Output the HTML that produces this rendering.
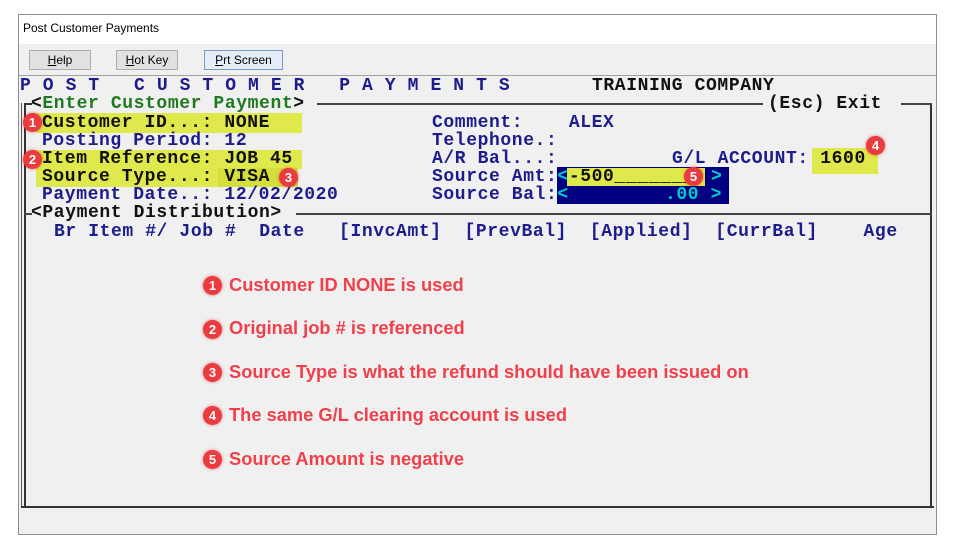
<!DOCTYPE html>
<html><head><meta charset="utf-8"><style>
*{margin:0;padding:0;box-sizing:border-box}
body{width:975px;height:552px;background:#fff;position:relative;overflow:hidden;font-family:"Liberation Sans",sans-serif}
.a{position:absolute}
.m{position:absolute;font-family:"Liberation Mono",monospace;font-weight:bold;font-size:18px;letter-spacing:0.6px;line-height:18px;white-space:pre;color:#1c1c8c}
.k{color:#111}
.g{color:#1f7a1f}
.btn{position:absolute;top:50px;height:20px;background:#e1e1e1;border:1px solid #adadad;font-size:12px;text-align:center;line-height:18px;color:#000}
.c{position:absolute;width:19px;height:19px;border-radius:50%;background:#ea3b3f;color:#fff;font:bold 13px/19px "Liberation Sans",sans-serif;text-align:center;box-shadow:0 0 3px rgba(200,0,0,.5)}
.t{position:absolute;left:229px;color:#f0404c;font:bold 18.3px/20px "Liberation Sans",sans-serif;letter-spacing:0px}
.hl{position:absolute;background:#dfe94c}
</style></head><body>
<div class="a" style="left:18px;top:14px;width:919px;height:521px;border:1px solid #8a8f96;background:#f0f0f0"></div>
<div class="a" style="left:19px;top:15px;width:917px;height:29px;background:#fff"></div>
<div class="a" style="left:23px;top:21px;font-size:12px;color:#000">Post Customer Payments</div>
<div class="btn" style="left:29px;width:62px"><u>H</u>elp</div>
<div class="btn" style="left:116px;width:62px"><u>H</u>ot Key</div>
<div class="btn" style="left:204px;width:79px;border-color:#7a9cc4;background:#e5eef8"><u>P</u>rt Screen</div>
<div class="a" style="left:19px;top:75px;width:917px;height:1px;background:#a0a0a0"></div>

<div class="hl" style="left:36px;top:113px;width:266px;height:20px"></div>
<div class="hl" style="left:36px;top:150px;width:266px;height:19px"></div>
<div class="hl" style="left:36px;top:168px;width:182px;height:19px"></div>
<div class="hl" style="left:218px;top:168px;width:80px;height:19px;background:#d4de3c"></div>
<div class="hl" style="left:812px;top:148px;width:66px;height:26px"></div>
<div class="a" style="left:557px;top:167px;width:172px;height:37px;background:#000080"></div>
<div class="hl" style="left:567px;top:168px;width:138px;height:18px"></div>

<div class="a" style="left:24px;top:103px;width:2px;height:404px;background:#333"></div>
<div class="a" style="left:21px;top:103px;width:1px;height:404px;background:#555"></div>
<div class="a" style="left:930px;top:103px;width:2px;height:404px;background:#333"></div>
<div class="a" style="left:24px;top:103px;width:8px;height:2px;background:#333"></div>
<div class="a" style="left:317px;top:103px;width:446px;height:2px;background:#444"></div>
<div class="a" style="left:901px;top:103px;width:31px;height:2px;background:#444"></div>
<div class="a" style="left:24px;top:213px;width:8px;height:2px;background:#444"></div>
<div class="a" style="left:296px;top:213px;width:636px;height:2px;background:#444"></div>
<div class="a" style="left:21px;top:506px;width:913px;height:2px;background:#333"></div>

<div class="m" style="left:20px;top:77px">P O S T   C U S T O M E R   P A Y M E N T S</div>
<div class="m k" style="left:592px;top:77px">TRAINING COMPANY</div>
<div class="m" style="left:31px;top:95px"><span class="k">&lt;</span><span class="g">Enter Customer Payment</span><span class="k">&gt;</span></div>
<div class="m k" style="left:768px;top:95px">(Esc) Exit</div>
<div class="m" style="left:42px;top:114px"><span class="k">Customer ID...: NONE</span></div>
<div class="m" style="left:42px;top:132px">Posting Period: 12</div>
<div class="m" style="left:42px;top:150px"><span class="k">Item Reference: JOB 45</span></div>
<div class="m" style="left:42px;top:168px"><span class="k">Source Type...: VISA</span></div>
<div class="m" style="left:42px;top:186px">Payment Date..: 12/02/2020</div>
<div class="m" style="left:432px;top:114px">Comment:    ALEX</div>
<div class="m" style="left:432px;top:132px">Telephone.:</div>
<div class="m" style="left:432px;top:150px">A/R Bal...:</div>
<div class="m" style="left:672px;top:150px">G/L ACCOUNT: <span class="k">1600</span></div>
<div class="m" style="left:432px;top:168px">Source Amt:<span style="color:#0cc">&lt;</span><span class="k">-500_______</span></div>
<div class="m" style="left:711px;top:168px;color:#0cc">&gt;</div>
<div class="m" style="left:432px;top:186px">Source Bal:<span style="color:#0cc">&lt;</span></div>
<div class="m" style="left:665px;top:186px;color:#0cc">.00 &gt;</div>
<div class="m k" style="left:31px;top:204px">&lt;Payment Distribution&gt;</div>
<div class="m" style="left:54px;top:223px">Br Item #/ Job #  Date   [InvcAmt]  [PrevBal]  [Applied]  [CurrBal]    Age</div>

<div class="c" style="left:23px;top:113px">1</div>
<div class="c" style="left:23px;top:150px">2</div>
<div class="c" style="left:279px;top:168px">3</div>
<div class="c" style="left:866px;top:136px">4</div>
<div class="c" style="left:684px;top:167px">5</div>

<div class="c" style="left:203px;top:276px">1</div><div class="t" style="top:275px">Customer ID NONE is used</div>
<div class="c" style="left:203px;top:320px">2</div><div class="t" style="top:318px">Original job # is referenced</div>
<div class="c" style="left:203px;top:363px">3</div><div class="t" style="top:362px">Source Type is what the refund should have been issued on</div>
<div class="c" style="left:203px;top:406px">4</div><div class="t" style="top:405px">The same G/L clearing account is used</div>
<div class="c" style="left:203px;top:450px">5</div><div class="t" style="top:449px">Source Amount is negative</div>
</body></html>
